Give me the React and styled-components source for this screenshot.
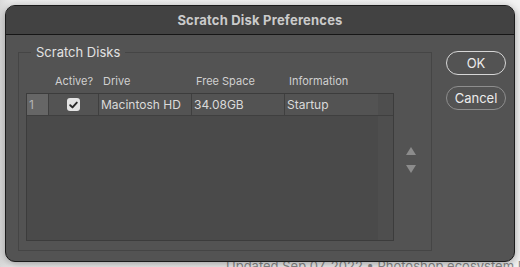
import React from 'react'
import styled, { createGlobalStyle } from 'styled-components'

const GlobalStyle = createGlobalStyle`
  html, body {
    margin: 0;
    padding: 0;
    background: #e9e9e9;
  }
  body {
    font-family: Inter, "Noto Sans", "Liberation Sans", sans-serif;
    -webkit-font-smoothing: antialiased;
  }
`

const Page = styled.div`
  position: relative;
  width: 520px;
  height: 267px;
  overflow: hidden;
  background: linear-gradient(90deg, #d9d9d9 0px, #ededed 12px, #f2f2f2 100%);
`

const PageByline = styled.div`
  position: absolute;
  left: 226px;
  top: 258px;
  font-size: 13px;
  color: #8a8a8a;
  white-space: nowrap;
`

/* the dialog is a window lying over the page */
const Dialog = styled.div`
  position: absolute;
  left: 5px;
  top: 5px;
  width: 508px;
  height: 255px;
  display: flex;
  flex-direction: column;
  background: #535353;
  border: 1px solid #1b1b1b;
  border-radius: 10px;
  overflow: hidden;
  box-shadow: 0 2px 8px rgba(0, 0, 0, 0.35);
`

const TitleBar = styled.div`
  height: 28px;
  flex-shrink: 0;
  display: flex;
  align-items: center;
  justify-content: center;
  background: #424242;
  border-bottom: 1px solid #161616;
  color: #cbcbcb;
  font-size: 13px;
  font-weight: 700;
  letter-spacing: 0.2px;
`

const Body = styled.div`
  flex: 1;
  display: flex;
  padding: 9px 8px 0 12px;
  gap: 14px;
`

const Group = styled.fieldset`
  margin: 0;
  width: 414px;
  height: 207px;
  box-sizing: border-box;
  padding: 14px 0 9px 7px;
  border: 1px solid #454545;
  display: flex;
  flex-direction: column;
`

const Legend = styled.legend`
  margin-left: 5px;
  padding: 0 5px;
  font-size: 13px;
  line-height: 16px;
  color: #e2e2e2;
`

const Content = styled.div`
  flex: 1;
  display: flex;
  gap: 12px;
`

const TableArea = styled.div`
  width: 368px;
  display: flex;
  flex-direction: column;
`

const COLS = '22px 50px 93px 93px 93px 1fr'

const HeaderRow = styled.div`
  display: grid;
  grid-template-columns: ${COLS};
  padding-left: 1px;
  height: 14px;
  margin-bottom: 5px;
  font-size: 11px;
  line-height: 14px;
  color: #d0d0d0;
`

const HeaderCell = styled.div`
  padding-left: ${p => (p.$center ? 0 : 4)}px;
  text-align: ${p => (p.$center ? 'center' : 'left')};
  white-space: nowrap;
`

const Table = styled.div`
  flex: 1;
  display: flex;
  flex-direction: column;
  background: #4a4a4a;
  border: 1px solid #3c3c3c;
  background-image: linear-gradient(90deg, transparent 351px, #4e4e4e 351px);
`

const Row = styled.div`
  display: grid;
  grid-template-columns: ${COLS};
  height: 21px;
  border-bottom: 1px solid #3f3f3f;
  font-size: 12px;
  color: #dadada;
`

const Cell = styled.div`
  display: flex;
  align-items: center;
  justify-content: ${p => (p.$center ? 'center' : 'flex-start')};
  padding-left: ${p => (p.$center ? 0 : 2)}px;
  background: ${p => p.$bg || '#535353'};
  border-right: ${p => (p.$last ? 'none' : '1px solid #3f3f3f')};
  color: ${p => p.$color || 'inherit'};
  white-space: nowrap;
`

const Check = styled.span`
  width: 13px;
  height: 13px;
  border-radius: 3px;
  background: #e4e4e4;
  display: flex;
  align-items: center;
  justify-content: center;
`

const Arrows = styled.div`
  display: flex;
  flex-direction: column;
  justify-content: center;
  align-items: center;
  gap: 10px;
  padding-top: 4px;
`

const Triangle = styled.span`
  width: 0;
  height: 0;
  border-left: 5px solid transparent;
  border-right: 5px solid transparent;
  ${p => (p.$down
    ? 'border-top: 8px solid #8c8c8c;'
    : 'border-bottom: 8px solid #8c8c8c;')}
`

const Buttons = styled.div`
  display: flex;
  flex-direction: column;
  gap: 11px;
  padding-top: 7px;
`

const Button = styled.button`
  width: 60px;
  height: 24px;
  border-radius: 12px;
  background: transparent;
  border: 1px solid ${p => (p.$primary ? '#d6d6d6' : '#8e8e8e')};
  color: #ececec;
  font-family: inherit;
  font-size: 13px;
  padding: 0;
  cursor: pointer;
`

const columns = [
  { label: '', center: false },
  { label: 'Active?', center: true },
  { label: 'Drive' },
  { label: 'Free Space' },
  { label: 'Information' },
]

export default function App() {
  return (
    <Page>
      <GlobalStyle />
      <PageByline>Updated Sep 07, 2022 • Photoshop ecosystem Discussions</PageByline>
      <Dialog>
        <TitleBar>Scratch Disk Preferences</TitleBar>
        <Body>
          <Group>
            <Legend>Scratch Disks</Legend>
            <Content>
              <TableArea>
                <HeaderRow>
                  {columns.map((c, i) => (
                    <HeaderCell key={i} $center={c.center}>{c.label}</HeaderCell>
                  ))}
                </HeaderRow>
                <Table>
                  <Row>
                    <Cell $bg="#666666" $color="#b4b4b4">1</Cell>
                    <Cell $center>
                      <Check>
                        <svg width="9" height="8" viewBox="0 0 9 8">
                          <path d="M1.2 4.2 L3.5 6.4 L7.8 1.6" fill="none" stroke="#2a2a2a" strokeWidth="1.9" strokeLinecap="round" strokeLinejoin="round" />
                        </svg>
                      </Check>
                    </Cell>
                    <Cell>Macintosh HD</Cell>
                    <Cell>34.08GB</Cell>
                    <Cell $last>Startup</Cell>
                    <Cell $bg="transparent" $last />
                  </Row>
                </Table>
              </TableArea>
              <Arrows>
                <Triangle />
                <Triangle $down />
              </Arrows>
            </Content>
          </Group>
          <Buttons>
            <Button $primary>OK</Button>
            <Button>Cancel</Button>
          </Buttons>
        </Body>
      </Dialog>
    </Page>
  )
}
